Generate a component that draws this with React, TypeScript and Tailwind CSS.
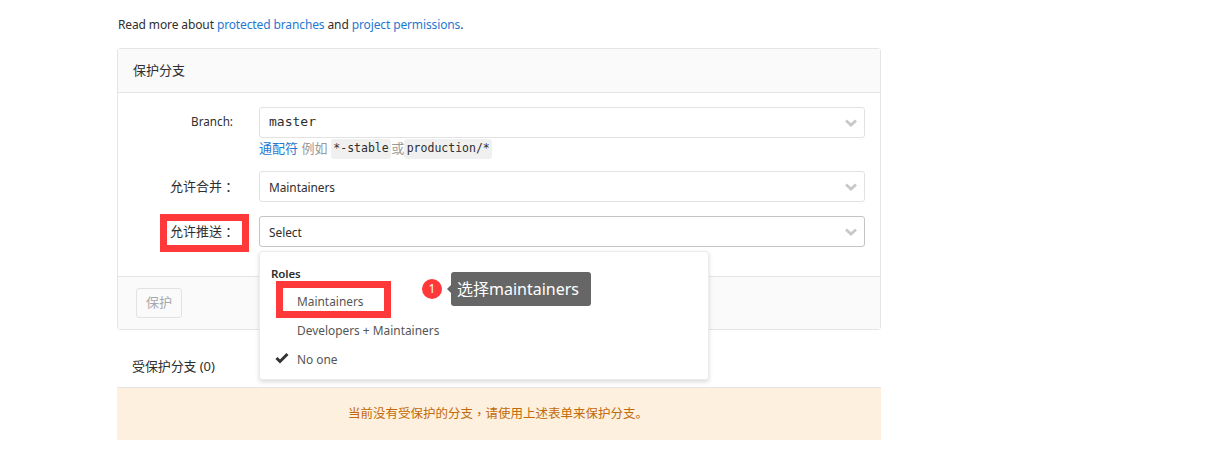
const sans = "font-['Noto_Sans','Noto_Sans_CJK_SC',sans-serif]";
const mono = "font-['DejaVu_Sans_Mono','Noto_Sans_CJK_SC',monospace]";

function Chevron() {
  return (
    <svg width="12" height="12" viewBox="0 0 12 12" className="mr-[2px]">
      <path d="M1 3.5 L6 8 L11 3.5" fill="none" stroke="#c8c8c8" strokeWidth="2.8" />
    </svg>
  );
}

function SelectBox({ label, code, active }: { label: string; code?: boolean; active?: boolean }) {
  return (
    <div
      className={`flex h-[31px] items-center justify-between rounded-[3px] border bg-white pl-[9px] pr-[5px] ${
        active ? "border-[#c4c4c4]" : "border-[#e2e2e2]"
      }`}
    >
      <span
        className={
          code
            ? `${mono} -translate-y-[1px] text-[13px] text-[#2e2e2e]`
            : "translate-y-[1px] text-[11.9px] tracking-[-0.05px] text-[#2e2e2e]"
        }
      >
        {label}
      </span>
      <Chevron />
    </div>
  );
}

function Code({ children }: { children: string }) {
  return <code className={`${mono} rounded-[3px] bg-[#f0f0f0] px-[2.5px] py-[1px] text-[11.5px] text-[#2e2e2e]`}>{children}</code>;
}

function Colon() {
  return <span className="font-['Noto_Sans_CJK_TC',sans-serif]">：</span>;
}

function MenuItem({ children }: { children: React.ReactNode }) {
  return <div className="relative flex h-[29px] items-center pl-[37px] text-[11.9px] text-[#555]">{children}</div>;
}

export default function App() {
  return (
    <div className={`${sans} relative h-[467px] w-[1211px] overflow-hidden bg-white pl-[117px] text-[12px] text-[#2e2e2e]`}>
      <div className="w-[764px]">
        <p className="flex h-[48px] items-center pl-[1px] pt-[1px] text-[12px] tracking-[-0.12px]">
          <span className="whitespace-pre">
            Read more about <span className="text-[#1f78d1]">protected branches</span> and{" "}
            <span className="text-[#1f78d1]">project permissions</span>.
          </span>
        </p>

        <div className="h-[282px] rounded-[3px] border border-[#e5e5e5]">
          <div className="flex h-[44px] items-center border-b border-[#e5e5e5] bg-[#fafafa] pl-[15px] text-[13px]">保护分支</div>

          <div className="h-[183px] px-[15px] pt-[14px]">
            <div className="flex gap-[10px]">
              <div className="flex h-[31px] w-[116px] items-center justify-end pb-[2px] pr-[16px] text-[11.7px]">Branch:</div>
              <div className="flex-1">
                <SelectBox label="master" code />
                <div className="flex h-[20px] translate-y-[1px] items-center whitespace-pre text-[13px] text-[#9a9a9a]">
                  <span className="text-[#1f78d1]">通配符</span> 例如 <Code>*-stable</Code>或<Code>production/*</Code>
                </div>
              </div>
            </div>

            <div className="mt-[13px] flex gap-[10px]">
              <div className="flex h-[31px] w-[116px] items-center justify-end pr-[14px] text-[13px]">
                允许合并
                <Colon />
              </div>
              <div className="flex-1">
                <SelectBox label="Maintainers" />
              </div>
            </div>

            <div className="mt-[14px] flex gap-[10px]">
              <div className="flex h-[31px] w-[116px] items-center justify-end pr-[14px] pt-[1px] text-[13px]">
                允许推送
                <Colon />
              </div>
              <div className="flex-1">
                <SelectBox label="Select" active />
              </div>
            </div>
          </div>

          <div className="flex h-[53px] items-center border-t border-[#e5e5e5] bg-[#fafafa] pl-[18px]">
            <button className="h-[30px] w-[46px] rounded-[3px] border border-[#e2e2e2] text-[13px] text-[#a8a8a8]">保护</button>
          </div>
        </div>

        <div className="mt-[16px] flex h-[42px] items-center border-b border-[#e5e5e5] pl-[15px] text-[13px]">
          <span className="tracking-[-0.1px]">受保护分支 (0)</span>
        </div>
        <div className="flex h-[52px] items-center justify-center bg-[#fdf0df] pr-[2px] pt-[1px] text-[12.5px] text-[#c26a0a]">
          当前没有受保护的分支<span className="font-['Noto_Sans_CJK_TC',sans-serif]">，</span>请使用上述表单来保护分支。
        </div>
      </div>

      {/* dropdown menu */}
      <div className="absolute left-[259px] top-[251px] h-[129px] w-[450px] rounded-[3px] border border-[#ececec] bg-white shadow-[0_2px_4px_rgba(0,0,0,0.15)]">
        <div className="pl-[11px] pt-[14px] text-[11.5px] font-semibold leading-[16px] tracking-[-0.1px]">Roles</div>
        <div className="mt-[5px]">
          <MenuItem>Maintainers</MenuItem>
          <MenuItem>Developers + Maintainers</MenuItem>
          <MenuItem>
            <svg width="14" height="12" viewBox="0 0 14 12" className="absolute left-[15px] top-[7px]">
              <path d="M1.5 6 L5 9.5 L12.5 2" fill="none" stroke="#333" strokeWidth="3" />
            </svg>
            No one
          </MenuItem>
        </div>
      </div>

      {/* annotations */}
      <div className="absolute left-[160px] top-[214px] h-[38px] w-[89px] border-[7px] border-[#ff3939]" />
      <div className="absolute left-[276px] top-[281px] h-[37px] w-[115px] border-[7px] border-[#ff3939]" />
      <div className="absolute left-[422px] top-[279px] flex h-[20px] w-[20px] items-center justify-center rounded-full bg-[#ff3939] text-[12px] text-white">1</div>
      <div className="absolute left-[451px] top-[272px] flex h-[34px] w-[140px] items-center rounded-[3px] bg-[#666666] pl-[6px] text-[16px] text-white">
        <span className="absolute left-[-4px] top-[13px] h-0 w-0 border-y-[4px] border-r-[4px] border-y-transparent border-r-[#666666]" />
        选择maintainers
      </div>
    </div>
  );
}
